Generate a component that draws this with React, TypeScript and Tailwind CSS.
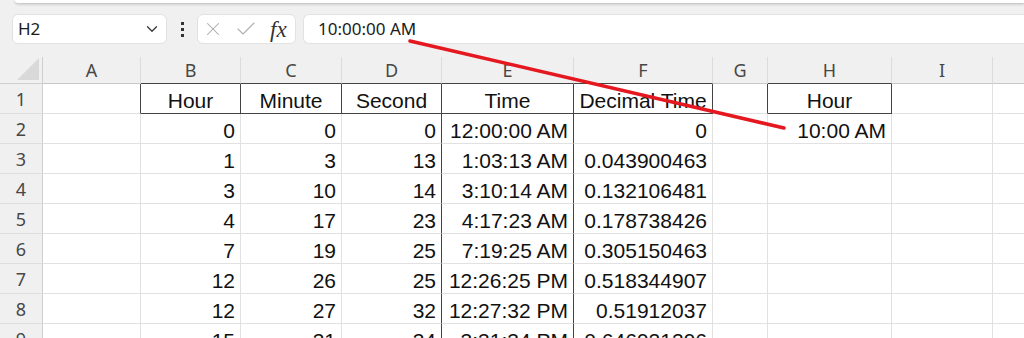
import { ChevronDown, X, Check } from 'lucide-react';

const colWidths = 'grid-cols-[43px_98px_100px_101px_100px_132px_139px_55px_124px_101px_100px]';
// J is off the right edge, its letter is not in view
const letters = ['A', 'B', 'C', 'D', 'E', 'F', 'G', 'H', 'I', ''];

// values for columns A..J, row 1 first
const rows: string[][] = [
  ['', 'Hour', 'Minute', 'Second', 'Time', 'Decimal Time', '', 'Hour', '', ''],
  ['', '0', '0', '0', '12:00:00 AM', '0', '', '10:00 AM', '', ''],
  ['', '1', '3', '13', '1:03:13 AM', '0.043900463', '', '', '', ''],
  ['', '3', '10', '14', '3:10:14 AM', '0.132106481', '', '', '', ''],
  ['', '4', '17', '23', '4:17:23 AM', '0.178738426', '', '', '', ''],
  ['', '7', '19', '25', '7:19:25 AM', '0.305150463', '', '', '', ''],
  ['', '12', '26', '25', '12:26:25 PM', '0.518344907', '', '', '', ''],
  ['', '12', '27', '32', '12:27:32 PM', '0.51912037', '', '', '', ''],
  ['', '15', '31', '34', '3:31:34 PM', '0.646921296', '', '', '', ''],
];

// which cells get the dark table border
const headerCols = [1, 2, 3, 4, 5, 7];
const darkRight = (r: number, c: number) =>
  r === 0 ? [0, 1, 2, 3, 4, 5, 6, 7].includes(c) : c === 3 || c === 4;
const darkBottom = (r: number, c: number) => r === 0 && headerCols.includes(c);

const Cell = ({ value, r, c }: { value: string; r: number; c: number }) => (
  <div
    className={`flex h-[30px] items-end overflow-visible whitespace-nowrap border-r border-b bg-white px-[5px] pb-[2px] text-[21px] leading-none text-[#111] ${
      r === 0 ? 'justify-center' : 'justify-end'
    } ${darkRight(r, c) ? 'border-r-[#444]' : 'border-r-[#e1e1e1]'} ${
      darkBottom(r, c) ? 'border-b-[#444]' : 'border-b-[#e1e1e1]'
    }`}
  >
    {value}
  </div>
);

const App = () => {
  return (
    <div className="relative h-[338px] w-[1024px] overflow-hidden bg-[#f0f0f0] font-['Liberation_Sans',Arial,sans-serif]">
      {/* ribbon edge */}
      <div className="ml-[15px] h-[3px] rounded-bl-md bg-white shadow-[0_1px_3px_rgba(0,0,0,0.25)]"></div>

      {/* formula bar */}
      <div className="mt-[11px] flex h-[30px] items-stretch font-['Noto_Sans',sans-serif] text-[#1b1b1b]">
        <div className="ml-[12px] flex w-[155px] items-center justify-between rounded-[6px] border border-[#e2e2e2] bg-white pr-[5px] pl-[5px] text-[17px]">
          <span>H2</span>
          <ChevronDown size={18} strokeWidth={1.6} className="text-[#333]" />
        </div>
        <div className="flex w-[30px] flex-col items-center justify-center gap-[3px]">
          <span className="h-[3px] w-[3px] bg-[#333]"></span>
          <span className="h-[3px] w-[3px] bg-[#333]"></span>
          <span className="h-[3px] w-[3px] bg-[#333]"></span>
        </div>
        <div className="flex w-[99px] items-center rounded-[6px] border border-[#e2e2e2] bg-white pl-[4px]">
          <X size={22} strokeWidth={1.1} className="text-[#a8a8a8]" />
          <Check size={24} strokeWidth={1.1} className="ml-[10px] text-[#b0b0b0]" />
          <span className="ml-[12px] font-['Liberation_Serif',serif] text-[23px] italic leading-none text-[#333]">fx</span>
        </div>
        <div className="ml-[7px] flex flex-1 items-center rounded-l-[6px] border border-r-0 border-[#e2e2e2] bg-white pl-[14px] text-[17px]">
          10:00:00 AM
        </div>
      </div>

      {/* sheet */}
      <div className={`mt-[13px] grid ${colWidths}`}>
        <div className="flex h-[27px] items-end justify-end border-r border-b border-[#cfcfcf] pr-[3px] pb-[3px]">
          <svg width="22" height="22" viewBox="0 0 22 22">
            <polygon points="22,0 22,22 0,22" fill="#d9d9d9" />
          </svg>
        </div>
        {letters.map((l, c) => (
          <div
            key={c}
            className={`flex h-[27px] items-center justify-center border-r border-b border-r-[#dcdcdc] font-['Noto_Sans',sans-serif] text-[18px] text-[#474747] ${
              headerCols.includes(c) ? 'border-b-[#444]' : 'border-b-[#c8c8c8]'
            }`}
          >
            {l}
          </div>
        ))}

        {rows.map((row, r) => (
          <div key={r} className="contents">
            <div className="flex h-[30px] items-center justify-center border-r border-b border-r-[#cfcfcf] border-b-[#dedede] pt-[2px] font-['Noto_Sans',sans-serif] text-[18px] text-[#474747]">
              {r + 1}
            </div>
            {row.map((v, c) => (
              <Cell key={c} value={v} r={r} c={c} />
            ))}
          </div>
        ))}
      </div>

      {/* red annotation line */}
      <svg className="pointer-events-none absolute inset-0" width="1024" height="338">
        <line x1="410" y1="41" x2="784" y2="128" stroke="#e5171f" strokeWidth="3.5" strokeLinecap="round" />
      </svg>
    </div>
  );
};

export default App;
